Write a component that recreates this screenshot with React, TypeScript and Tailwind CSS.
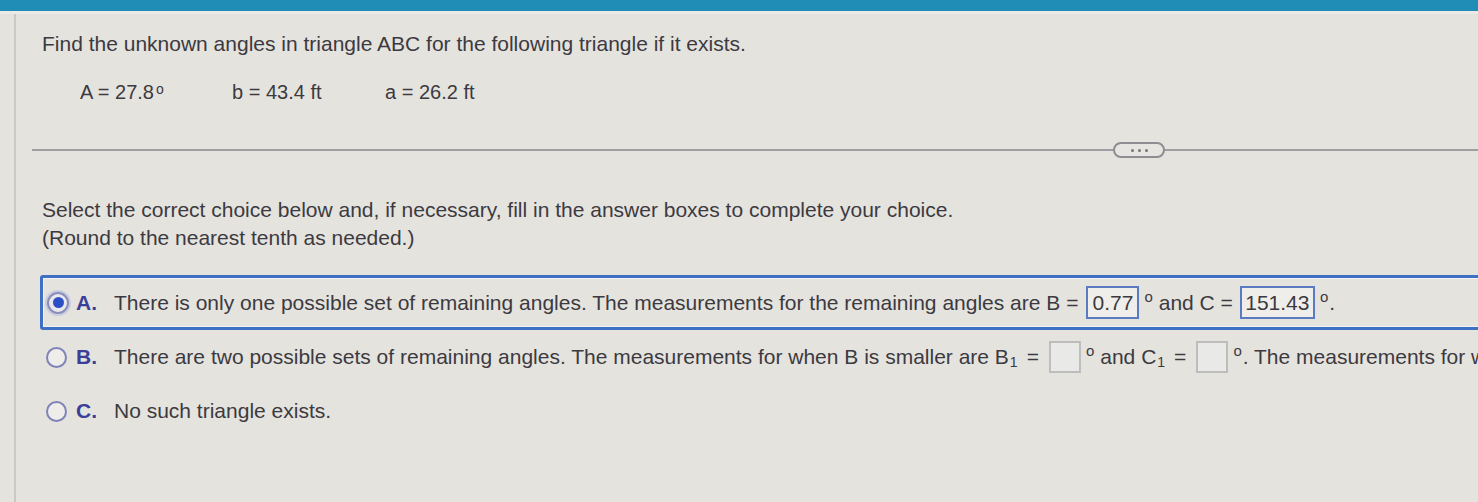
import React from "react";

function Radio({ selected }: { selected?: boolean }) {
  if (selected) {
    return (
      <span className="flex items-center justify-center w-[22px] h-[22px] rounded-full border-2 border-[#8b8fb8] bg-[#e9e8ee] shadow-[0_0_0_2px_#c9cbe0]">
        <span className="w-[11px] h-[11px] rounded-full bg-[#2d4fc6]" />
      </span>
    );
  }
  return <span className="block w-[21px] h-[21px] rounded-full border-2 border-[#7e83b8] bg-[#eeedea]" />;
}

function Deg({ tight }: { tight?: boolean }) {
  return (
    <sup className={tight ? "text-[15px] relative top-[-6px] ml-[5px] mr-[1px]" : "text-[15px] relative top-[-6px] ml-[5px] mr-[6px]"}>
      o
    </sup>
  );
}

export default function App() {
  return (
    <div
      className="w-[1478px] h-[502px] overflow-hidden bg-[#e5e3de] text-[#3c3a41] flex flex-col"
      style={{ fontFamily: '"Liberation Sans", Arial, sans-serif' }}
    >
      <div className="h-[11px] bg-[#1f8db6] shrink-0" />
      <div className="h-[3px] bg-[#eceae6] shrink-0" />
      <div className="flex flex-1">
        <div className="w-[16px] shrink-0 border-r-2 border-[#cbc9c5]" />
        <div className="flex-1 flex flex-col">
          <div className="pl-[26px] pt-[17px] text-[21px] leading-[26px] whitespace-nowrap">
            Find the unknown angles in triangle ABC for the following triangle if it exists.
          </div>
          <div className="flex pl-[64px] mt-[22px] text-[20px] leading-[26px] whitespace-nowrap">
            <div className="w-[152px]">
              A = 27.8<sup className="text-[14px] relative top-[-5px] ml-[2px]">o</sup>
            </div>
            <div className="w-[153px]">b = 43.4 ft</div>
            <div>a = 26.2 ft</div>
          </div>
          <div className="relative ml-[16px] mt-[37px] h-[16px] flex items-center">
            <div className="flex-1 h-[2px] bg-[#a09ea3]" />
            <div className="absolute left-[1081px] top-0 w-[52px] h-[16px] rounded-full border-2 border-[#8f8d92] bg-[#e7e5e1] flex items-center justify-center gap-[4px]">
              <span className="w-[3px] h-[3px] rounded-full bg-[#77757a]" />
              <span className="w-[3px] h-[3px] rounded-full bg-[#77757a]" />
              <span className="w-[3px] h-[3px] rounded-full bg-[#77757a]" />
            </div>
          </div>
          <div className="pl-[26px] mt-[38px] text-[21px] leading-[28px] whitespace-nowrap">
            <div>Select the correct choice below and, if necessary, fill in the answer boxes to complete your choice.</div>
            <div>(Round to the nearest tenth as needed.)</div>
          </div>

          <div className="ml-[24px] mr-[-20px] mt-[23px] h-[55px] border-[3px] border-[#3e70c3] rounded-[3px] flex items-center whitespace-nowrap text-[21px] shadow-[inset_0_0_0_1px_#f3f3f6]">
            <div className="w-[4px]" />
            <Radio selected />
            <span className="ml-[7px] w-[38px] font-bold text-[#3b3f98]">A.</span>
            <span className="flex items-center">
              There is only one possible set of remaining angles. The measurements for the remaining angles are B =
              <span className="ml-[8px] w-[53px] h-[33px] border-2 border-[#5a7bc2] bg-[#efeeeb] flex items-center justify-center">0.77</span>
              <Deg />
              and C =
              <span className="ml-[7px] w-[75px] h-[33px] border-2 border-[#5a7bc2] bg-[#efeeeb] flex items-center justify-center">151.43</span>
              <Deg tight />
              .
            </span>
          </div>

          <div className="ml-[30px] mt-[11px] h-[32px] flex items-center whitespace-nowrap text-[21px]">
            <Radio />
            <span className="ml-[9px] w-[38px] font-bold text-[#3b3f98]">B.</span>
            <span className="flex items-center">
              There are two possible sets of remaining angles. The measurements for when B is smaller are B
              <sub className="text-[14px] relative top-[5px] ml-[1px]">1</sub>
              <span className="ml-[9px]">=</span>
              <span className="ml-[10px] w-[32px] h-[32px] border-2 border-[#bdbdbd] bg-[#e9e9e8]" />
              <Deg />
              and C
              <sub className="text-[14px] relative top-[5px] ml-[1px]">1</sub>
              <span className="ml-[9px]">=</span>
              <span className="ml-[10px] w-[32px] h-[32px] border-2 border-[#bdbdbd] bg-[#e9e9e8]" />
              <Deg tight />
              . The measurements for when B is larger are B
            </span>
          </div>

          <div className="ml-[30px] mt-[22px] h-[32px] flex items-center whitespace-nowrap text-[21px]">
            <Radio />
            <span className="ml-[9px] w-[38px] font-bold text-[#3b3f98]">C.</span>
            <span>No such triangle exists.</span>
          </div>
        </div>
      </div>
    </div>
  );
}
